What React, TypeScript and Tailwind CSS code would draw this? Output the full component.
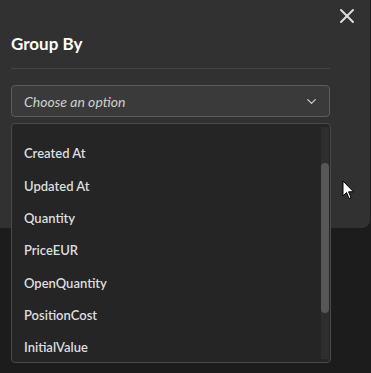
import { ChevronDown, X } from 'lucide-react';

const OPTIONS = ['Created At', 'Updated At', 'Quantity', 'PriceEUR', 'OpenQuantity', 'PositionCost', 'InitialValue'];

export default function App() {
  return (
    <div className="relative w-[371px] h-[373px] overflow-hidden bg-[#1c1c1c] text-white" style={{ fontFamily: 'Lato, "Noto Sans", sans-serif' }}>
      <div className="h-[228px] w-[370px] bg-[#313131] rounded-br-lg px-[11px] pt-[30px]">
        <button className="absolute right-[12px] top-[4px] text-[#dcdcdc]" aria-label="Close">
          <X className="w-6 h-6" strokeWidth={2} />
        </button>
        <h2 className="text-[17px] font-bold leading-[28px] text-white">Group By</h2>
        <div className="mt-[10px] w-[319px] h-px bg-[#454545]" />
        <div className="mt-[16px] w-[319px] h-[32px] flex items-center justify-between rounded border border-[#5c5c5c] bg-[#3a3a3a] pl-[12px] pr-[10px]">
          <span className="italic text-[14px] text-[#cfcfcf]">Choose an option</span>
          <ChevronDown className="w-[15px] h-[15px] text-[#c8c8c8]" strokeWidth={2.2} />
        </div>
      </div>

      <div className="absolute left-[11px] top-[123px] w-[320px] h-[240px] rounded border border-[#4a4a4a] bg-[#252525] flex">
        <ul className="flex-1 pt-[14px]">
          {OPTIONS.map((o) => (
            <li key={o} className="h-[32.3px] flex items-center pl-[12px] text-[13px] font-semibold text-[#dedede]">
              {o}
            </li>
          ))}
        </ul>
        <div className="w-[8px] my-[3px] mr-[1px] bg-[#2e2e2e] relative">
          <div className="absolute left-0 right-0 top-[36px] h-[150px] rounded-full bg-[#575757]" />
        </div>
      </div>

      <svg className="absolute left-[342px] top-[180px]" width="14" height="21" viewBox="0 0 14 21">
        <path d="M1 1 L1 16 L4.5 12.5 L7 18.5 L9 17.6 L6.6 11.8 L11.5 11.8 Z" fill="#fff" stroke="#000" strokeWidth="1" strokeLinejoin="round" />
      </svg>
    </div>
  );
}
